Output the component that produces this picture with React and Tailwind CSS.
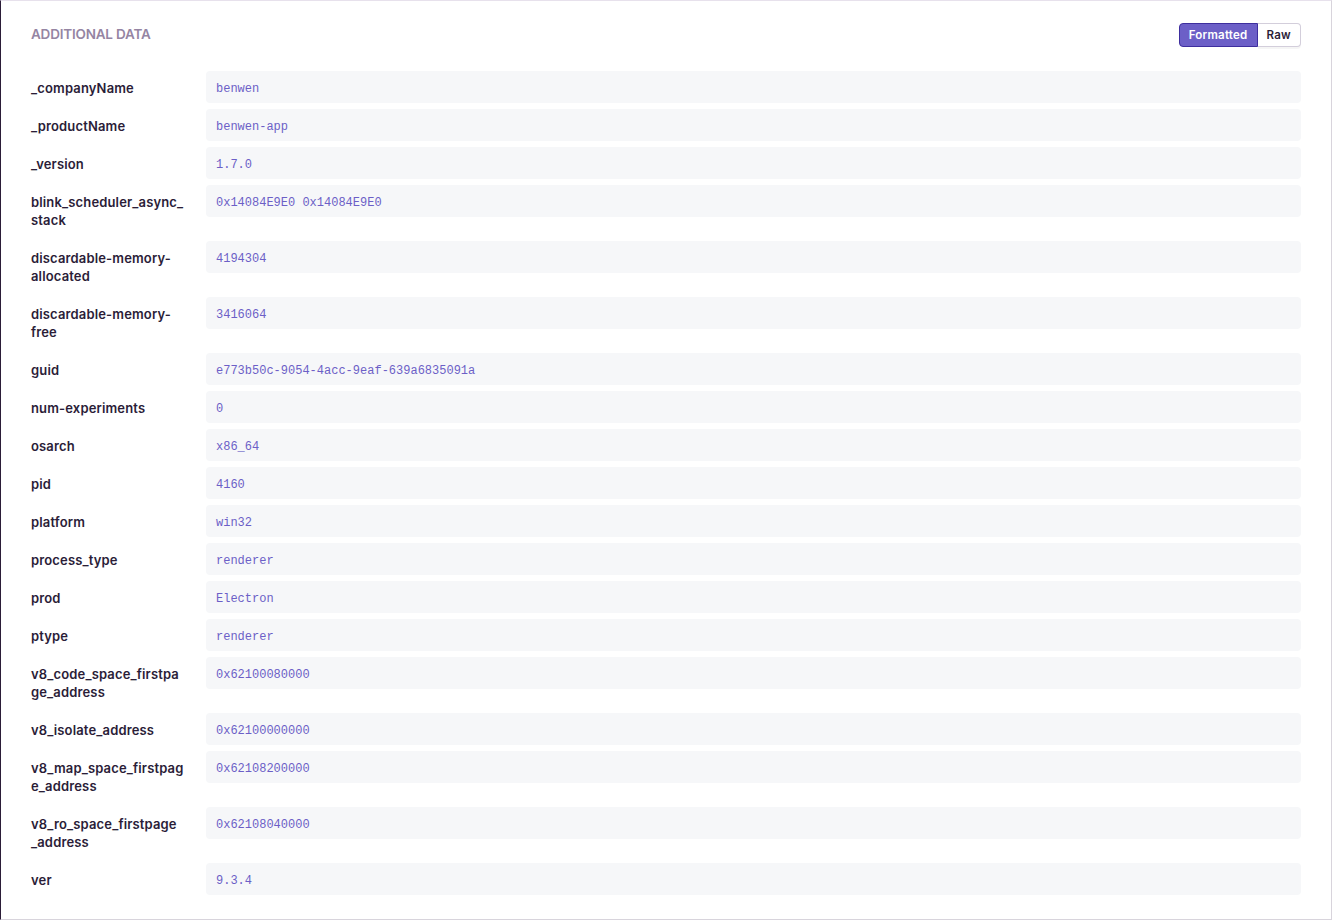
const rows = [
  [["_companyName"], "benwen"],
  [["_productName"], "benwen-app"],
  [["_version"], "1.7.0"],
  [["blink_scheduler_async_", "stack"], "0x14084E9E0 0x14084E9E0"],
  [["discardable-memory-", "allocated"], "4194304"],
  [["discardable-memory-", "free"], "3416064"],
  [["guid"], "e773b50c-9054-4acc-9eaf-639a6835091a"],
  [["num-experiments"], "0"],
  [["osarch"], "x86_64"],
  [["pid"], "4160"],
  [["platform"], "win32"],
  [["process_type"], "renderer"],
  [["prod"], "Electron"],
  [["ptype"], "renderer"],
  [["v8_code_space_firstpa", "ge_address"], "0x62100080000"],
  [["v8_isolate_address"], "0x62100000000"],
  [["v8_map_space_firstpag", "e_address"], "0x62108200000"],
  [["v8_ro_space_firstpage", "_address"], "0x62108040000"],
  [["ver"], "9.3.4"],
];

export default function App() {
  return (
    <div className="w-[1332px] h-[921px] bg-white" style={{ fontFamily: "Inter, 'Noto Sans', sans-serif" }}>
      <div className="h-[920px] border-t border-r border-b border-l border-t-[#e7e1ec] border-r-[#d8d4dc] border-b-[#d8d4dc] border-l-[#2b1d38] px-[30px] pt-[22px]">
        <div className="flex items-center justify-between h-[24px]">
          <h3 className="text-[13.5px] font-semibold uppercase tracking-[-0.2px] text-[#9585a3] leading-[20px] -mt-[3px]">
            Additional Data
          </h3>
          <div className="flex">
            <button className="h-[24px] px-[9px] pt-[2px] rounded-l-[4px] bg-[#6c5fc7] border border-[#3e2e9e] text-white text-[11.5px] font-semibold leading-none tracking-[0.25px]">
              Formatted
            </button>
            <button className="h-[24px] px-[9px] pt-[2px] rounded-r-[4px] bg-white border border-l-0 border-[#d3cedb] text-[#2b1d38] text-[11.5px] font-semibold leading-none tracking-[0.25px] shadow-[0_2px_0_rgba(0,0,0,0.04)]">
              Raw
            </button>
          </div>
        </div>
        <div className="mt-[24px] flex flex-col">
          {rows.map(([k, v]) => (
            <div key={k.join("")} className="flex mb-[6px]">
              <div className="w-[175px] shrink-0 pr-[10px] pt-[8px] pb-[6px] text-[13px] font-semibold leading-[18px] tracking-[0.15px] text-[#2b1d38] whitespace-nowrap">
                {k.map((part, i) => (
                  <div key={i}>{part}</div>
                ))}
              </div>
              <div className="flex-1 self-start h-[32px] rounded-[4px] bg-[#f6f7f9] px-[10px] pt-[3px] flex items-center text-[12px] text-[#6c5fc7]" style={{ fontFamily: "'Liberation Mono', 'DejaVu Sans Mono', monospace" }}>
                {v}
              </div>
            </div>
          ))}
        </div>
      </div>
    </div>
  );
}
